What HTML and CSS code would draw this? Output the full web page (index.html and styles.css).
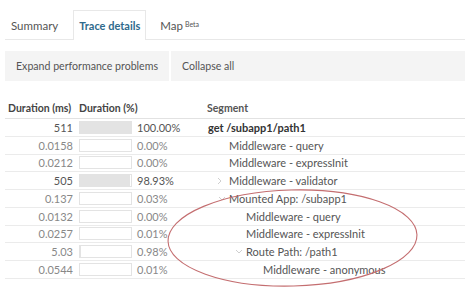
FILE: index.html
```html
<!DOCTYPE html>
<html lang="en">
<head>
  <meta charset="UTF-8" />
  <title>Trace details</title>
  <link rel="stylesheet" href="styles.css">
</head>
<body>
  <div class="page">
    <nav class="tabs">
      <a class="tab">Summary</a>
      <a class="tab active">Trace details</a>
      <a class="tab">Map <sup>Beta</sup></a>
    </nav>

    <div class="toolbar">
      <button>Expand performance problems</button>
      <button class="fill">Collapse all</button>
    </div>

    <div class="trace">
      <div class="row head">
        <div class="ms">Duration (ms)</div>
        <div class="pct-head">Duration (%)</div>
        <div class="seg">Segment</div>
      </div>

      <div class="row strong">
        <div class="ms">511</div>
        <div class="bar"><span style="width:100%"></span></div>
        <div class="pct">100.00%</div>
        <div class="seg lvl1 root">get /subapp1/path1</div>
      </div>
      <div class="row">
        <div class="ms">0.0158</div>
        <div class="bar"><span style="width:0%"></span></div>
        <div class="pct">0.00%</div>
        <div class="seg lvl2">Middleware - query</div>
      </div>
      <div class="row">
        <div class="ms">0.0212</div>
        <div class="bar"><span style="width:0%"></span></div>
        <div class="pct">0.00%</div>
        <div class="seg lvl2">Middleware - expressInit</div>
      </div>
      <div class="row strong">
        <div class="ms">505</div>
        <div class="bar"><span style="width:98.93%"></span></div>
        <div class="pct">98.93%</div>
        <div class="seg lvl2">
          <svg class="chev" width="5" height="8" viewBox="0 0 5 8"><path d="M1 1l3 3-3 3" /></svg>Middleware - validator
        </div>
      </div>
      <div class="row">
        <div class="ms">0.137</div>
        <div class="bar"><span style="width:0.03%"></span></div>
        <div class="pct">0.03%</div>
        <div class="seg lvl2">
          <svg class="chev down" width="8" height="5" viewBox="0 0 8 5"><path d="M1 1l3 3 3-3" /></svg>Mounted App: /subapp1
        </div>
      </div>
      <div class="row">
        <div class="ms">0.0132</div>
        <div class="bar"><span style="width:0%"></span></div>
        <div class="pct">0.00%</div>
        <div class="seg lvl3">Middleware - query</div>
      </div>
      <div class="row">
        <div class="ms">0.0257</div>
        <div class="bar"><span style="width:0.01%"></span></div>
        <div class="pct">0.01%</div>
        <div class="seg lvl3">Middleware - expressInit</div>
      </div>
      <div class="row">
        <div class="ms">5.03</div>
        <div class="bar"><span style="width:0.98%"></span></div>
        <div class="pct">0.98%</div>
        <div class="seg lvl3">
          <svg class="chev down" width="8" height="5" viewBox="0 0 8 5"><path d="M1 1l3 3 3-3" /></svg>Route Path: /path1
        </div>
      </div>
      <div class="row">
        <div class="ms">0.0544</div>
        <div class="bar"><span style="width:0.01%"></span></div>
        <div class="pct">0.01%</div>
        <div class="seg lvl4">Middleware - anonymous</div>
      </div>
    </div>

    <svg class="callout" width="474" height="291" viewBox="0 0 474 291">
      <ellipse cx="292.5" cy="238" rx="124.5" ry="48" transform="rotate(-1.5 292.5 238)" />
    </svg>
  </div>
</body>
</html>
```

FILE: styles.css
```css
:root {
  --text: #555;
  --muted: #888;
  --line: #ebebeb;
  --tab-blue: #2f6a8c;
  --panel: #f4f4f4;
}
body {
  margin: 0;
  background: #fff;
  font-family: Lato, 'Liberation Sans', Arial, sans-serif;
  color: var(--text);
}
.page {
  position: relative;
  width: 474px;
  height: 291px;
  padding: 10px 0 0 5px;
  box-sizing: border-box;
  overflow: hidden;
}
.tabs {
  display: flex;
  gap: 8px;
  width: 460px;
  border-bottom: 1px solid #e8e8e8;
  height: 29px;
}
.tab {
  display: flex;
  align-items: center;
  padding: 0 5px;
  font-size: 11.5px;
  color: #555;
  border: 1px solid transparent;
  border-bottom: none;
  margin-bottom: -1px;
}
.tab:first-child { padding-right: 6px; }
.tab.active {
  background: #fff;
  border-color: #e8e8e8;
  color: var(--tab-blue);
  font-weight: 700;
  font-size: 11px;
  height: 29px;
}
.tab sup {
  font-size: 7px;
  margin-left: 2px;
  position: relative;
  top: -2px;
}
.toolbar {
  display: flex;
  gap: 2px;
  width: 460px;
  margin-top: 11px;
  height: 30px;
}
.toolbar button {
  background: var(--panel);
  border: none;
  padding: 0 11px;
  font-family: inherit;
  font-size: 10.6px;
  color: #555;
  text-align: left;
}
.toolbar .fill { flex: 1; }
.trace {
  width: 460px;
  margin-top: 16px;
  font-size: 11px;
}
.row {
  display: grid;
  grid-template-columns: 71px 58px 71px 1fr;
  align-items: center;
  height: 17.75px;
  box-sizing: border-box;
  border-bottom: 1px solid var(--line);
  color: var(--muted);
}
.row.head {
  height: 22px;
  border-bottom-color: #e2e2e2;
  font-weight: 700;
  font-size: 10.5px;
  color: #444;
}
.row.strong { color: var(--text); }
.ms {
  text-align: right;
  padding-right: 3px;
}
.head .ms {
  text-align: left;
  padding: 0 0 0 3px;
  white-space: nowrap;
}
.pct-head {
  grid-column: span 2;
  padding-left: 3px;
}
.bar {
  margin-left: 3px;
  width: 53px;
  height: 13px;
  box-sizing: border-box;
  border: 1px solid #e3e3e3;
  background: #fff;
}
.bar span {
  display: block;
  height: 100%;
  background: #e3e3e3;
}
.pct { padding-left: 3px; }
.seg {
  display: flex;
  align-items: center;
  padding-left: 2px;
  white-space: nowrap;
  color: #555;
}
.seg.lvl1 { padding-left: 3px; }
.seg.lvl2 { padding-left: 24px; }
.seg.lvl3 { padding-left: 41px; }
.seg.lvl4 { padding-left: 58px; }
.seg.root {
  font-weight: 700;
  color: #333;
}
.chev {
  margin-left: -12px;
  margin-right: 7px;
  fill: none;
  stroke: #cfcfcf;
  stroke-width: 1;
}
.chev.down {
  margin-left: -11px;
  margin-right: 3px;
}
.callout {
  position: absolute;
  left: 0;
  top: 0;
  pointer-events: none;
}
.callout ellipse {
  fill: none;
  stroke: #c46e70;
  stroke-width: 1.1;
}
```
